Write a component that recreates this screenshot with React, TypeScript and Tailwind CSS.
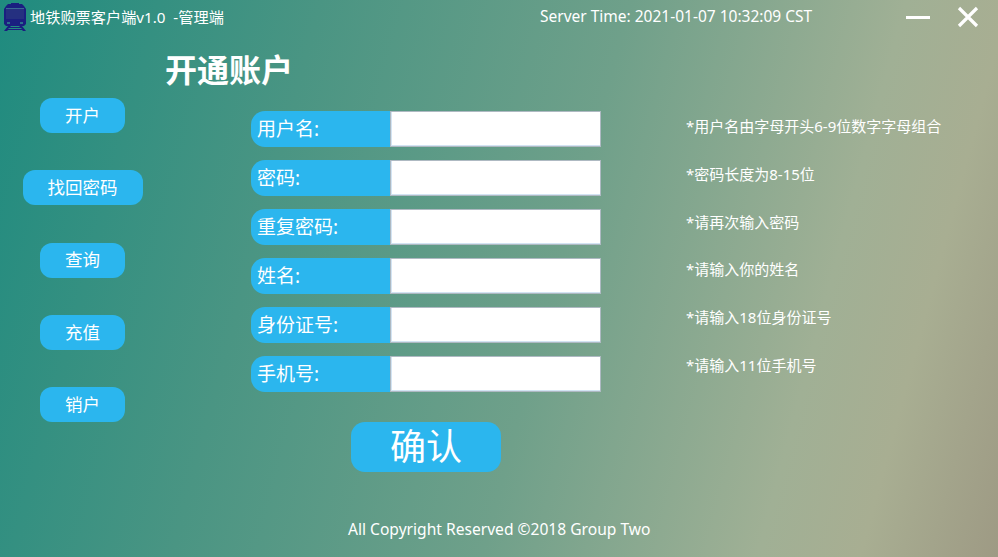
import { useState } from 'react';

const menuItems = [
  { label: '开户', wide: false },
  { label: '找回密码', wide: true },
  { label: '查询', wide: false },
  { label: '充值', wide: false },
  { label: '销户', wide: false },
];

const fields = [
  { label: '用户名:', hint: '*用户名由字母开头6-9位数字字母组合' },
  { label: '密码:', hint: '*密码长度为8-15位' },
  { label: '重复密码:', hint: '*请再次输入密码' },
  { label: '姓名:', hint: '*请输入你的姓名' },
  { label: '身份证号:', hint: '*请输入18位身份证号' },
  { label: '手机号:', hint: '*请输入11位手机号' },
];

function TrainIcon() {
  return (
    <svg width="22" height="28" viewBox="0 0 22 28" className="shrink-0">
      <path d="M7 0h8v1h3l2 2 2 3v15l-2 2H2l-2-2V6l2-3 2-2h3z" fill="#1a1f80" />
      <rect x="2" y="5" width="18" height="1" fill="#3a6a94" />
      <rect x="2" y="6" width="18" height="10" fill="#253080" />
      <rect x="3" y="19" width="3" height="2" fill="#2c6f8c" />
      <rect x="16" y="19" width="3" height="2" fill="#2c6f8c" />
      <path d="M4 23h3l-1 1h10l-1-1h3l4 5h-3l-1-1H4l-1 1H0zM5 25l-1 1h14l-1-1z" fill="#1a1f80" fillRule="evenodd" />
    </svg>
  );
}

export default function App() {
  const [values, setValues] = useState<string[]>(fields.map(() => ''));

  return (
    <div className="w-[998px] h-[557px] overflow-hidden flex flex-col text-white font-['Noto_Sans','Noto_Sans_CJK_SC',sans-serif] bg-[linear-gradient(105deg,#1f8b7f_0%,#4a9583_28%,#6fa08a_55%,#a0b095_79%,#a8ae92_88%,#9e9a84_100%)]">
      {/* Title bar */}
      <div className="h-[34px] shrink-0 flex items-center pl-[4px]">
        <TrainIcon />
        <span className="ml-[4px] w-[510px] text-[15.2px] whitespace-pre">地铁购票客户端v1.0  -管理端</span>
        <span className="text-[15.5px] w-[366px] whitespace-nowrap">Server Time: 2021-01-07 10:32:09 CST</span>
        <div className="w-[24px] h-[3px] bg-white" />
        <svg width="22" height="22" viewBox="0 0 22 22" className="ml-[27px]">
          <path d="M2 2l18 18M20 2L2 20" stroke="white" strokeWidth="3.2" />
        </svg>
      </div>

      <div className="flex flex-1 min-h-0">
        {/* Side menu */}
        <div className="w-[165px] shrink-0 flex flex-col items-center gap-[37.25px] pt-[64px]">
          {menuItems.map((item) => (
            <button
              key={item.label}
              className={`h-[35px] rounded-[12px] bg-[#2bb6ee] text-[17.5px] leading-none ${item.wide ? 'w-[120px]' : 'w-[85px]'}`}
            >
              {item.label}
            </button>
          ))}
        </div>

        {/* Main */}
        <div className="flex-1 min-w-0 flex flex-col">
          <h1 className="text-[32px] font-bold leading-[40px] mt-[16px]">开通账户</h1>

          <div className="mt-[21px] flex pl-[86px]">
            <div className="w-[435px] shrink-0 flex flex-col gap-[13px]">
              {fields.map((field, i) => (
                <div key={field.label} className="flex items-center h-[36px]">
                  <label className="w-[139px] h-full rounded-l-[14px] bg-[#2bb6ee] pl-[6px] flex items-center text-[19px] shrink-0">
                    {field.label}
                  </label>
                  <input
                    type="text"
                    value={values[i]}
                    onChange={(e) => setValues(values.map((v, j) => (j === i ? e.target.value : v)))}
                    className="w-[211px] h-full bg-white border border-[#aeb9c2] shadow-[inset_1px_-1px_0_#d3e4f3] outline-none shrink-0"
                  />
                </div>
              ))}
            </div>

            <div className="flex flex-col gap-[23.8px] pt-[3px]">
              {fields.map((field) => (
                <span key={field.hint} className="text-[15px] leading-[24px] whitespace-nowrap">
                  {field.hint}
                </span>
              ))}
            </div>
          </div>

          <button className="mt-[30px] ml-[186px] w-[150px] h-[50px] rounded-[14px] bg-[#2bb6ee] text-[36px] leading-none">
            确认
          </button>

          <p className="mt-[46px] ml-[183px] text-[15.6px] whitespace-nowrap">All Copyright Reserved ©2018 Group Two</p>
        </div>
      </div>
    </div>
  );
}
